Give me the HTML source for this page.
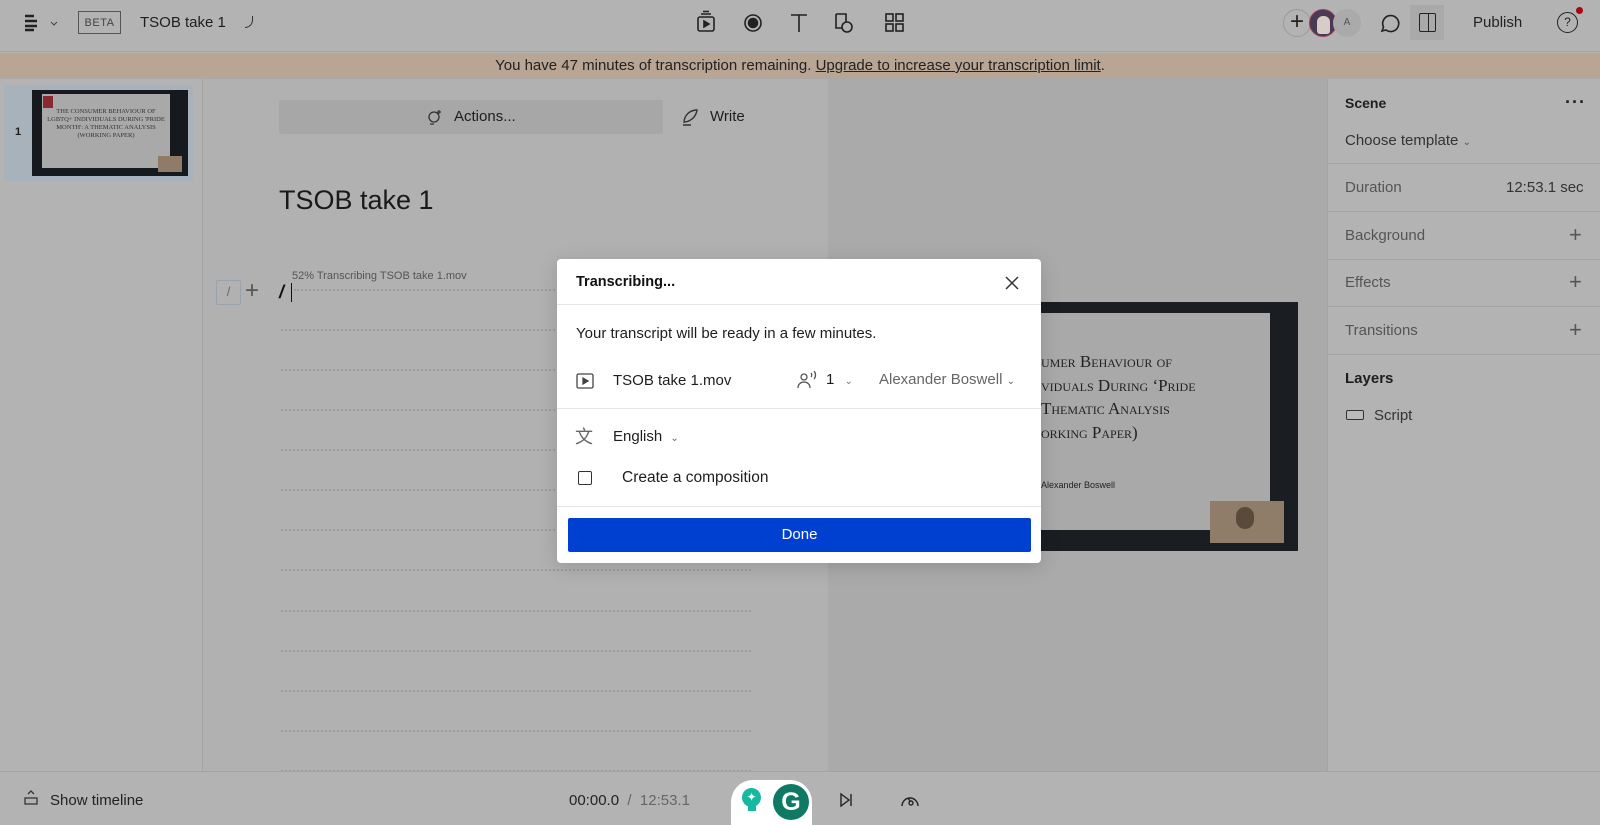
<!DOCTYPE html>
<html><head><meta charset="utf-8"><style>
*{box-sizing:border-box;margin:0;padding:0}
body{width:1600px;height:820px;overflow:hidden;background:#b3b3b3;font-family:"Liberation Sans",sans-serif;color:#222;position:relative}
.abs{position:absolute}
.t{font-size:15px;color:#1e1e1e;white-space:nowrap}
.dl{position:absolute;left:281px;width:470px;border-top:2px dotted #9c9c9c}
.rp{position:absolute;left:1327px;width:273px;border-top:1px solid #a3a3a3}
.rl{position:absolute;left:1345px;font-size:15px;color:#555}
.plus{position:absolute;left:1569px;font-size:22px;color:#555;font-weight:300;line-height:1}
</style></head><body>
<!-- top bar -->
<div class="abs" style="left:0;top:0;width:1600px;height:52px;background:#b3b3b3;border-bottom:1px solid #a3a3a3"></div>
<svg class="abs" style="left:22px;top:13px" width="40" height="20" viewBox="0 0 40 20"><path d="M3 3h9M3 8h12M3 13h12M3 17h9" stroke="#222" stroke-width="2.4"/><path d="M29 9l3 3 3-3" stroke="#444" fill="none" stroke-width="1"/></svg>
<div class="abs" style="left:78px;top:11px;width:43px;height:23px;border:1px solid #555;font-size:11px;color:#444;display:flex;align-items:center;justify-content:center;letter-spacing:.5px">BETA</div>
<div class="abs t" style="left:140px;top:14px;font-size:15px">TSOB take 1</div>
<div class="abs" style="left:245px;top:16px;width:8px;height:12px;border-right:1.5px solid #333;border-bottom:1.5px solid #333;border-radius:0 0 8px 0"></div>
<!-- center tools -->
<svg class="abs" style="left:696px;top:10px" width="220" height="26" viewBox="0 0 220 26" fill="none" stroke="#222" stroke-width="1.6">
<rect x="2" y="7" width="16" height="14" rx="2"/><path d="M5 4h10M7 1.5h6"/><path d="M8 11l5 3-5 3z" fill="#222"/>
<circle cx="57" cy="13" r="8"/><circle cx="57" cy="13" r="4.5" fill="#222"/>
<path d="M95 5h16M103 5v17"/>
<path d="M140 4h10v8M140 4v14h6"/><circle cx="151" cy="17" r="5"/>
<rect x="190" y="4" width="7" height="7"/><rect x="200" y="4" width="7" height="7"/><rect x="190" y="14" width="7" height="7"/><rect x="200" y="14" width="7" height="7"/>
</svg>
<!-- right top -->
<div class="abs" style="left:1283px;top:9px;width:28px;height:28px;border-radius:50%;border:1px solid #9a9a9a;font-size:24px;line-height:24px;text-align:center;color:#222;font-weight:300">+</div>
<div class="abs" style="left:1309px;top:9px;width:28px;height:28px;border-radius:50%;background:#4a3a55;border:1.5px solid #a0405a"><div style="margin:6px 0 0 7px;width:13px;height:18px;border-radius:6px 6px 3px 3px;background:#d8ccc8"></div></div>
<div class="abs" style="left:1333px;top:9px;width:28px;height:28px;border-radius:50%;background:#aaa;font-size:10px;line-height:28px;text-align:center;color:#555">A</div>
<svg class="abs" style="left:1378px;top:12px" width="22" height="22" viewBox="0 0 22 22"><path d="M4 19l1.5-4A8 8 0 1 1 8 18z" fill="none" stroke="#222" stroke-width="1.6"/></svg>
<div class="abs" style="left:1410px;top:5px;width:34px;height:35px;background:#a9a9a9"></div>
<div class="abs" style="left:1419px;top:13px;width:17px;height:19px;border:1.6px solid #222;border-radius:2px"><div style="position:absolute;left:8px;top:0;bottom:0;border-left:1.6px solid #222"></div></div>
<div class="abs t" style="left:1473px;top:14px;font-size:15px;color:#222">Publish</div>
<div class="abs" style="left:1557px;top:12px;width:21px;height:21px;border:1.5px solid #222;border-radius:50%;font-size:12px;text-align:center;line-height:18px">?</div>
<div class="abs" style="left:1576px;top:7px;width:7px;height:7px;border-radius:50%;background:#b00010"></div>
<!-- banner -->
<div class="abs" style="left:0;top:53px;width:1600px;height:26px;background:#b9a594;border-bottom:1px solid #a8a8a8;text-align:center;font-size:15px;line-height:26px;color:#222">You have 47 minutes of transcription remaining. <u>Upgrade to increase your transcription limit</u>.</div>
<!-- left panel -->
<div class="abs" style="left:202px;top:79px;height:692px;border-left:1px solid #a3a3a3"></div>
<div class="abs" style="left:4px;top:85px;width:189px;height:97px;background:#a8b2bb;border-radius:3px"></div>
<div class="abs t" style="left:15px;top:126px;font-size:11px;font-weight:bold">1</div>
<div class="abs" style="left:32px;top:90px;width:156px;height:86px;background:#161a1e"><div style="position:absolute;left:10px;top:4px;width:128px;height:74px;background:#a9a9a9;font-family:'Liberation Serif',serif;font-size:6.5px;text-align:center;color:#333;padding-top:14px;line-height:8px">THE CONSUMER BEHAVIOUR OF<br>LGBTQ+ INDIVIDUALS DURING 'PRIDE<br>MONTH': A THEMATIC ANALYSIS<br>(WORKING PAPER)</div><div style="position:absolute;left:11px;top:6px;width:10px;height:12px;background:#8a2a30"></div><div style="position:absolute;left:126px;top:66px;width:24px;height:16px;background:#8f7c68"></div></div>
<!-- editor -->
<div class="abs" style="left:203px;top:79px;width:625px;height:692px;background:#b1b1b1"></div>
<div class="abs" style="left:279px;top:100px;width:384px;height:34px;background:#a7a7a7;border-radius:2px"></div>
<svg class="abs" style="left:426px;top:108px" width="18" height="18" viewBox="0 0 18 18" fill="none" stroke="#333" stroke-width="1.3"><circle cx="8" cy="9" r="5"/><path d="M4 16h4M13 2v4M11 4h4"/></svg>
<div class="abs t" style="left:454px;top:108px">Actions...</div>
<svg class="abs" style="left:680px;top:107px" width="20" height="20" viewBox="0 0 20 20" fill="none" stroke="#333" stroke-width="1.4"><path d="M4 16C4 8 10 3 17 3 16 10 11 14 5 15M3 18h8"/></svg>
<div class="abs t" style="left:710px;top:108px">Write</div>
<div class="abs t" style="left:279px;top:185px;font-size:27px;color:#1a1a1a">TSOB take 1</div>
<div class="abs" style="left:216px;top:280px;width:25px;height:25px;border:1.5px solid #99a3ad;border-radius:2px;font-size:13px;color:#666;text-align:center;line-height:22px">/</div>
<div class="abs" style="left:245px;top:279px;font-size:24px;color:#555;font-weight:300;line-height:24px">+</div>
<div class="abs t" style="left:292px;top:270px;font-size:11px;color:#555">52% Transcribing TSOB take 1.mov</div>
<div class="abs" style="left:279px;top:282px;font-size:18px;font-style:italic;font-weight:bold;color:#111">/</div>
<div class="abs" style="left:291px;top:283px;height:19px;border-left:1.5px solid #111"></div>
<div class="dl" style="left:294px;width:457px;top:289px"></div>
<div class="dl" style="top:329px"></div><div class="dl" style="top:369px"></div><div class="dl" style="top:409px"></div><div class="dl" style="top:449px"></div><div class="dl" style="top:489px"></div><div class="dl" style="top:529px"></div><div class="dl" style="top:569px"></div><div class="dl" style="top:610px"></div><div class="dl" style="top:650px"></div><div class="dl" style="top:690px"></div><div class="dl" style="top:730px"></div><div class="dl" style="top:770px"></div>
<!-- preview -->
<div class="abs" style="left:828px;top:79px;width:499px;height:692px;background:#aaaaaa"></div>
<div class="abs" style="left:1041px;top:302px;width:257px;height:249px;background:#1a1d22"></div>
<div class="abs" style="left:1041px;top:313px;width:229px;height:217px;background:#a9a9a9"></div>
<div class="abs" style="left:1041px;top:350px;font-family:'Liberation Serif',serif;font-size:17px;line-height:23.5px;color:#222;font-variant:small-caps;white-space:nowrap">umer Behaviour of<br>viduals During ‘Pride<br>Thematic Analysis<br>orking Paper)</div>
<div class="abs t" style="left:1041px;top:480px;font-size:9px;color:#222">Alexander Boswell</div>
<div class="abs" style="left:1210px;top:501px;width:74px;height:42px;background:#8f7d6a"><div style="margin:6px 0 0 26px;width:18px;height:22px;border-radius:9px;background:#5a4a3c"></div></div>
<!-- right panel -->
<div class="abs" style="left:1327px;top:79px;width:273px;height:692px;background:#b3b3b3;border-left:1px solid #a3a3a3"></div>
<div class="abs t" style="left:1345px;top:95px;font-weight:bold;font-size:14px">Scene</div>
<div class="abs" style="left:1565px;top:92px;font-size:18px;font-weight:bold;letter-spacing:1px">···</div>
<div class="abs t" style="left:1345px;top:132px;color:#333">Choose template <span style="font-size:10px;color:#555">&#8964;</span></div>
<div class="rp" style="top:163px"></div>
<div class="rl" style="top:179px">Duration</div><div class="abs t" style="left:1506px;top:179px;color:#333">12:53.1 sec</div>
<div class="rp" style="top:211px"></div>
<div class="rl" style="top:227px">Background</div><div class="plus" style="top:224px">+</div>
<div class="rp" style="top:259px"></div>
<div class="rl" style="top:274px">Effects</div><div class="plus" style="top:271px">+</div>
<div class="rp" style="top:306px"></div>
<div class="rl" style="top:322px">Transitions</div><div class="plus" style="top:319px">+</div>
<div class="rp" style="top:354px"></div>
<div class="abs t" style="left:1345px;top:370px;font-weight:bold">Layers</div>
<div class="abs" style="left:1346px;top:410px;width:18px;height:10px;border:1.5px solid #333;border-radius:2px;background:#bbb"></div>
<div class="abs t" style="left:1374px;top:407px;color:#333">Script</div>
<!-- bottom bar -->
<div class="abs" style="left:0;top:771px;width:1600px;height:49px;background:#b3b3b3;border-top:1px solid #a3a3a3"></div>
<svg class="abs" style="left:23px;top:790px" width="16" height="16" viewBox="0 0 16 16" fill="none" stroke="#333" stroke-width="1.3"><path d="M5 4l3-3 3 3M2 8h12v6H2z"/></svg>
<div class="abs t" style="left:50px;top:792px;color:#222">Show timeline</div>
<div class="abs t" style="left:569px;top:792px;color:#222">00:00.0 <span style="color:#666">&nbsp;/&nbsp; 12:53.1</span></div>
<div class="abs" style="left:731px;top:780px;width:81px;height:45px;background:#fff;border-radius:22px 22px 0 0"></div>
<div class="abs" style="left:742px;top:788px;width:19px;height:19px;border-radius:50%;background:#15b8a0;color:#fff;font-size:12px;text-align:center;line-height:19px">✦</div>
<div class="abs" style="left:748px;top:806px;width:8px;height:5px;background:#15b8a0"></div>
<div class="abs" style="left:773px;top:784px;width:36px;height:36px;border-radius:50%;background:#0f7a64;color:#fff;font-size:25px;font-weight:bold;text-align:center;line-height:36px">G</div>
<svg class="abs" style="left:838px;top:792px" width="16" height="16" viewBox="0 0 16 16" fill="none" stroke="#222" stroke-width="1.4"><path d="M3 2l8 6-8 6zM13 2v12"/></svg>
<svg class="abs" style="left:900px;top:792px" width="20" height="16" viewBox="0 0 20 16" fill="none" stroke="#222" stroke-width="1.4"><path d="M2 14A8 8 0 1 1 18 14"/><circle cx="11" cy="11" r="2"/><path d="M10 9L8 6"/></svg>
<!-- modal -->
<div class="abs" style="left:557px;top:259px;width:484px;height:304px;background:#fff;border-radius:4px;box-shadow:0 4px 20px rgba(0,0,0,.15)">
<div class="abs t" style="left:19px;top:15px;font-size:14.5px;font-weight:bold;color:#111">Transcribing...</div>
<svg class="abs" style="left:448px;top:17px" width="14" height="14" viewBox="0 0 14 14" stroke="#333" stroke-width="1.5"><path d="M1 1l12 12M13 1L1 13"/></svg>
<div class="abs" style="left:0;top:45px;width:484px;border-top:1px solid #e5e5e5"></div>
<div class="abs t" style="left:19px;top:66px">Your transcript will be ready in a few minutes.</div>
<svg class="abs" style="left:19px;top:114px" width="18" height="16" viewBox="0 0 18 16" fill="none" stroke="#444" stroke-width="1.3"><rect x="1" y="1" width="16" height="14" rx="1.5"/><path d="M7 5l5 3-5 3z" fill="#444"/></svg>
<div class="abs t" style="left:56px;top:113px">TSOB take 1.mov</div>
<svg class="abs" style="left:240px;top:112px" width="20" height="18" viewBox="0 0 20 18" fill="none" stroke="#555" stroke-width="1.3"><circle cx="7" cy="6" r="3"/><path d="M1 17c0-4 3-6 6-6s6 2 6 6M14 2c1 1 1 3 0 4M17 0c2 2 2 6 0 8"/></svg>
<div class="abs t" style="left:269px;top:112px">1 <span style="font-size:10px;color:#777;margin-left:6px">&#8964;</span></div>
<div class="abs t" style="left:322px;top:112px;color:#666">Alexander Boswell <span style="font-size:10px">&#8964;</span></div>
<div class="abs" style="left:0;top:149px;width:484px;border-top:1px solid #e5e5e5"></div>
<div class="abs t" style="left:18px;top:167px;font-size:18px;color:#666;font-family:'Noto Sans CJK SC',sans-serif;line-height:20px">文</div>
<div class="abs t" style="left:56px;top:169px">English <span style="font-size:10px;color:#666;margin-left:4px">&#8964;</span></div>
<div class="abs" style="left:21px;top:212px;width:14px;height:14px;border:1.5px solid #333;border-radius:2px"></div>
<div class="abs t" style="left:65px;top:210px;font-size:15.5px">Create a composition</div>
<div class="abs" style="left:0;top:247px;width:484px;border-top:1px solid #e5e5e5"></div>
<div class="abs" style="left:11px;top:259px;width:463px;height:34px;background:#0040d0;border-radius:2px;color:#fff;font-size:15px;text-align:center;line-height:34px">Done</div>
</div>
</body></html>
